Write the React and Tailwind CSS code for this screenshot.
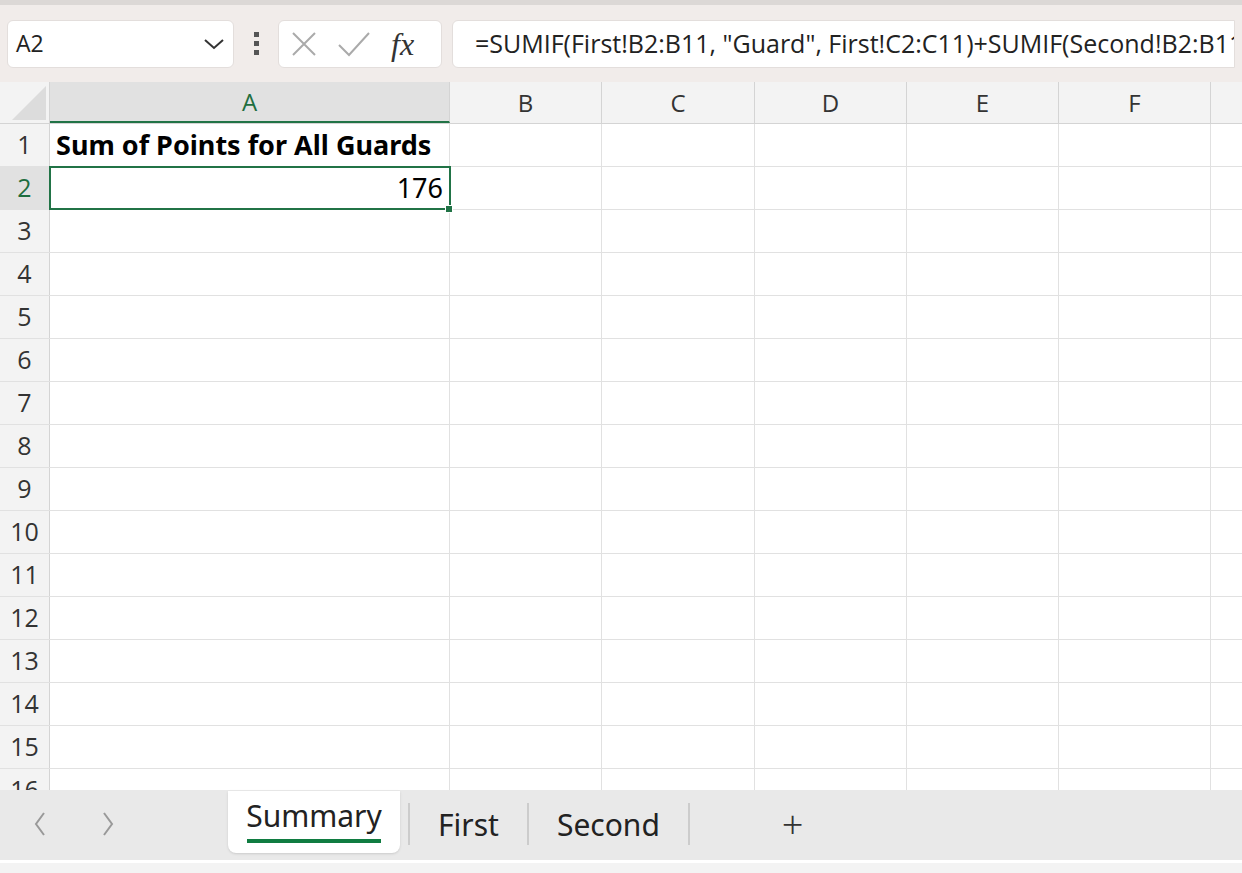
import React from "react";

const cols = [
  { l: "A", w: 400 },
  { l: "B", w: 152 },
  { l: "C", w: 153 },
  { l: "D", w: 152 },
  { l: "E", w: 152 },
  { l: "F", w: 152 },
  { l: "", w: 100 },
];

export default function App() {
  const rows = Array.from({ length: 16 }, (_, i) => i + 1);
  return (
    <div className="w-[1242px] h-[873px] overflow-hidden bg-white flex flex-col" style={{ fontFamily: '"Open Sans", "Noto Sans", sans-serif' }}>
      <div className="h-[82px] bg-[#f1ecea] border-t-[5px] border-[#dcd8d6] flex items-center px-[7px] shrink-0">
        <div className="w-[227px] h-[48px] shrink-0 bg-white rounded-md border border-[#e3dedc] flex items-center justify-between px-2 text-[23px] text-[#222]">
          <span>A2</span>
          <svg width="22" height="14" viewBox="0 0 22 14"><path d="M2 3l9 8 9-8" stroke="#333" strokeWidth="2" fill="none" /></svg>
        </div>
        <div className="w-[44px] shrink-0 flex flex-col items-center gap-[4px]">
          <div className="w-[5px] h-[5px] bg-[#555]" /><div className="w-[5px] h-[5px] bg-[#555]" /><div className="w-[5px] h-[5px] bg-[#555]" />
        </div>
        <div className="w-[164px] h-[48px] shrink-0 bg-white rounded-md border border-[#e3dedc] flex items-center px-3 gap-5">
          <svg width="26" height="26" viewBox="0 0 26 26"><path d="M2 2l22 22M24 2L2 24" stroke="#aaa" strokeWidth="2" /></svg>
          <svg width="34" height="26" viewBox="0 0 34 26"><path d="M2 14l10 10L32 2" stroke="#aaa" strokeWidth="2" fill="none" /></svg>
          <span className="text-[32px] italic text-[#333]" style={{ fontFamily: '"Liberation Serif", serif' }}>fx</span>
        </div>
        <div className="ml-[10px] flex-1 min-w-0 h-[48px] bg-white rounded-l-md border border-[#e3dedc] flex items-center pl-[22px] text-[25px] text-[#222] whitespace-nowrap overflow-hidden">
          =SUMIF(First!B2:B11, "Guard", First!C2:C11)+SUMIF(Second!B2:B11, "Guard", Second!C2:C11)
        </div>
      </div>
      <div className="flex-1 min-h-0 flex flex-col overflow-hidden">
        <div className="flex h-[42px] bg-[#f3f3f3] border-b border-[#d4d4d4] shrink-0">
          <div className="w-[50px] shrink-0 border-r border-[#d4d4d4] relative">
            <svg className="absolute right-[3px] bottom-[3px]" width="34" height="34"><path d="M34 0V34H0Z" fill="#dcdcdc" /></svg>
          </div>
          {cols.map((c, i) => (
            <div key={i} style={{ width: c.w }} className={`shrink-0 flex items-center justify-center text-[24px] border-r border-[#d4d4d4] ${i === 0 ? "bg-[#e1e1e1] text-[#1e6e3f] border-b-2 border-b-[#217346]" : "text-[#333]"}`}>{c.l}</div>
          ))}
        </div>
        {rows.map((r) => (
          <div key={r} className="flex h-[43px] shrink-0 border-b border-[#e1e1e1]">
            <div className={`w-[50px] shrink-0 flex items-center justify-center text-[25px] border-r border-[#d4d4d4] ${r === 2 ? "bg-[#e1e1e1] text-[#1e6e3f]" : "bg-[#f3f3f3] text-[#333]"}`}>{r}</div>
            {cols.map((c, i) => (
              <div key={i} style={{ width: c.w }} className={`shrink-0 border-r border-[#e1e1e1] flex items-center relative px-[6px] ${i === 0 && r === 2 ? "justify-end outline-2 outline-[#217346] -outline-offset-1 z-10" : ""}`}>
                {i === 0 && r === 1 && <span className="text-[27px] font-bold text-black whitespace-nowrap" style={{ fontFamily: '"Noto Sans", sans-serif' }}>Sum of Points for All Guards</span>}
                {i === 0 && r === 2 && <>
                  <span className="text-[27px] text-black" style={{ fontFamily: '"Noto Sans", sans-serif' }}>176</span>
                  <div className="absolute right-[-4px] bottom-[-4px] w-[8px] h-[8px] bg-[#217346] border border-white" />
                </>}
              </div>
            ))}
          </div>
        ))}
      </div>
      <div className="h-[70px] bg-[#e9e9e9] shrink-0 flex items-start">
        <div className="flex items-center gap-[52px] pl-[32px] h-[68px] text-[#999]">
          <svg width="16" height="26"><path d="M12 2L4 13l8 11" stroke="#999" strokeWidth="2" fill="none" /></svg>
          <svg width="16" height="26"><path d="M4 2l8 11-8 11" stroke="#999" strokeWidth="2" fill="none" /></svg>
        </div>
        <div className="ml-[112px] mt-[1px] w-[172px] h-[62px] shrink-0 bg-white rounded-b-lg shadow-sm flex flex-col items-center justify-center">
          <span className="text-[30px] text-[#222] leading-none" style={{ fontFamily: '"Noto Sans", sans-serif' }}>Summary</span>
          <div className="mt-[8px] w-[134px] h-[4px] bg-[#107c41]" />
        </div>
        <div className="flex items-center h-[68px] text-[30px] text-[#222]" style={{ fontFamily: '"Noto Sans", sans-serif' }}>
          <div className="h-[42px] border-l-2 border-[#ccc] ml-[8px]" />
          <span className="px-[28px]">First</span>
          <div className="h-[42px] border-l-2 border-[#ccc]" />
          <span className="px-[28px]">Second</span>
          <div className="h-[42px] border-l-2 border-[#ccc]" />
          <span className="ml-[92px] text-[38px] font-light text-[#333]">+</span>
        </div>
      </div>
      <div className="h-[13px] shrink-0 bg-[#f3f3f3] border-t-[3px] border-white" />
    </div>
  );
}
